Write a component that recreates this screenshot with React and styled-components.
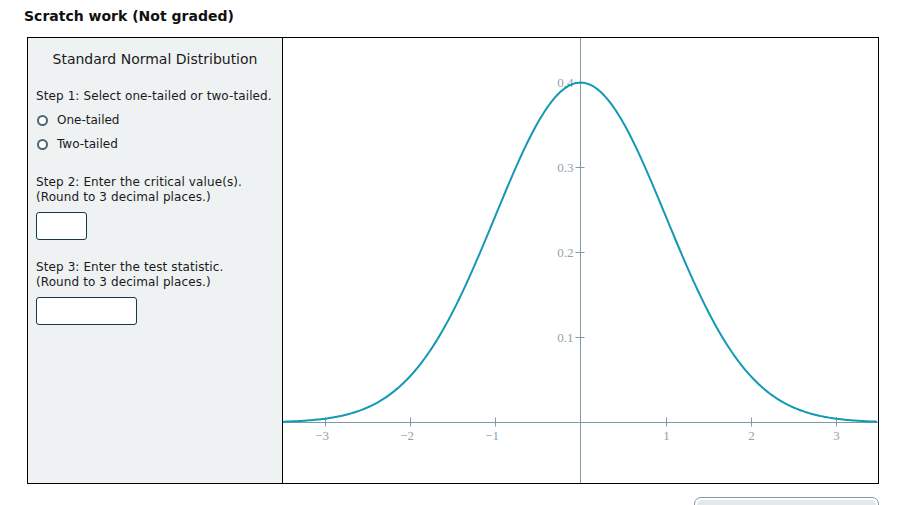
import styled, { createGlobalStyle } from 'styled-components';

const GlobalStyle = createGlobalStyle`
body {
  margin: 0;
  background: #fff;
  font-family: "DejaVu Sans", Verdana, sans-serif;
  color: #111;
}
`

const Page = styled.div`
  width: 912px;
  height: 505px;
  overflow: hidden;
  padding: 7px 0 0 24px;
  box-sizing: border-box;
`
const Title = styled.h2`
  margin: 0;
  font-size: 14px;
  line-height: 18px;
  font-weight: bold;
`
const Workspace = styled.div`
  margin: 12px 0 0 3px;
  width: 852px;
  height: 447px;
  box-sizing: border-box;
  border: 1px solid #000;
  display: flex;
`
const Panel = styled.div`
  width: 255px;
  box-sizing: border-box;
  border-right: 1px solid #000;
  background: #eef2f3;
  padding: 11px 8px 0 8px;
  display: flex;
  flex-direction: column;
  align-items: flex-start;
`
const Heading = styled.div`
  align-self: stretch;
  text-align: center;
  font-size: 14px;
  line-height: 20px;
  color: #1a1a1a;
`
const Step = styled.p`
  margin: ${p => p.$top}px 0 0 0;
  font-size: 12px;
  line-height: 15px;
  letter-spacing: 0.1px;
  color: #1a1a1a;
`
const RadioList = styled.div`
  margin-top: 4px;
  display: flex;
  flex-direction: column;
`
const RadioRow = styled.label`
  height: 24px;
  display: flex;
  align-items: center;
  gap: 9px;
  padding-left: 1px;
  font-size: 12px;
  color: #1a1a1a;
`
const RadioDot = styled.span`
  width: 11px;
  height: 11px;
  box-sizing: border-box;
  border: 2px solid #4d6771;
  border-radius: 50%;
  background: #fff;
`
const Field = styled.input`
  margin-top: 7px;
  width: ${p => p.$w}px;
  height: 28px;
  box-sizing: border-box;
  border: 1px solid #173844;
  border-radius: 3px;
  background: #fff;
  padding: 0 4px;
  font: inherit;
`
const Chart = styled.div`
  width: 595px;
  height: 445px;
  background: #fff;
`
const Footer = styled.div`
  width: 852px;
  margin: 13px 0 0 3px;
  display: flex;
  justify-content: flex-end;
`
const Button = styled.button`
  width: 185px;
  height: 32px;
  padding: 2px;
  border: 1px solid #7e9aa5;
  border-radius: 7px;
  background: #fff;
  display: flex;
`
const ButtonFill = styled.span`
  flex: 1;
  border-radius: 5px;
  background: #e4e9eb;
`

const X0 = 297.5;
const Y0 = 384.5;
const SX = 85.3;
const SY = 852;
const axis = '#7e9aa5';
const label = '#8fa3ab';

function normalPath() {
  const pts = [];
  for (let px = 0; px <= 595; px += 2) {
    const z = (px - X0) / SX;
    const d = Math.exp(-z * z / 2) / Math.sqrt(2 * Math.PI);
    pts.push(`${px.toFixed(1)},${(Y0 - d * SY).toFixed(2)}`);
  }
  return 'M' + pts.join(' L');
}

function NormalChart() {
  const xs = [-3, -2, -1, 1, 2, 3];
  const ys = [0.1, 0.2, 0.3, 0.4];
  return (
    <svg width="595" height="445" viewBox="0 0 595 445">
      <line x1="0" y1={Y0} x2="595" y2={Y0} stroke={axis} strokeWidth="1" />
      <line x1={X0} y1="0" x2={X0} y2="445" stroke={axis} strokeWidth="1" />
      {xs.map(v => {
        const x = Math.round(X0 + v * SX) + 0.5;
        return (
          <g key={v}>
            <line x1={x} y1={Y0 - 5} x2={x} y2={Y0 + 4} stroke={axis} />
            <text x={v < 0 ? x + 3.5 : x} y={Y0 + 17} textAnchor={v < 0 ? 'end' : 'middle'}
              fontFamily='"Liberation Serif", serif' fontSize="13" fill={label}>
              {v < 0 ? `\u2212${-v}` : v}
            </text>
          </g>
        );
      })}
      {ys.map(v => {
        const y = Math.round(Y0 - v * SY) + 0.5;
        return (
          <g key={v}>
            <line x1={X0 - 5} y1={y} x2={X0 + 4} y2={y} stroke={axis} />
            <text x={X0 - 7} y={y + 4.5} textAnchor="end"
              fontFamily='"Liberation Serif", serif' fontSize="13" fill={label}>
              {v.toFixed(1)}
            </text>
          </g>
        );
      })}
      <path d={normalPath()} fill="none" stroke="#1299b4" strokeWidth="2" />
    </svg>
  );
}

export default function App() {
  return (
    <Page>
      <GlobalStyle />
      <Title>Scratch work (Not graded)</Title>
      <Workspace>
        <Panel>
          <Heading>Standard Normal Distribution</Heading>
          <Step $top={20}>Step 1: Select one-tailed or two-tailed.</Step>
          <RadioList>
            <RadioRow><RadioDot />One-tailed</RadioRow>
            <RadioRow><RadioDot />Two-tailed</RadioRow>
          </RadioList>
          <Step $top={19}>Step 2: Enter the critical value(s).<br />(Round to 3 decimal places.)</Step>
          <Field $w={51} />
          <Step $top={20}>Step 3: Enter the test statistic.<br />(Round to 3 decimal places.)</Step>
          <Field $w={101} />
        </Panel>
        <Chart>
          <NormalChart />
        </Chart>
      </Workspace>
      <Footer>
        <Button aria-label="continue"><ButtonFill /></Button>
      </Footer>
    </Page>
  );
}
